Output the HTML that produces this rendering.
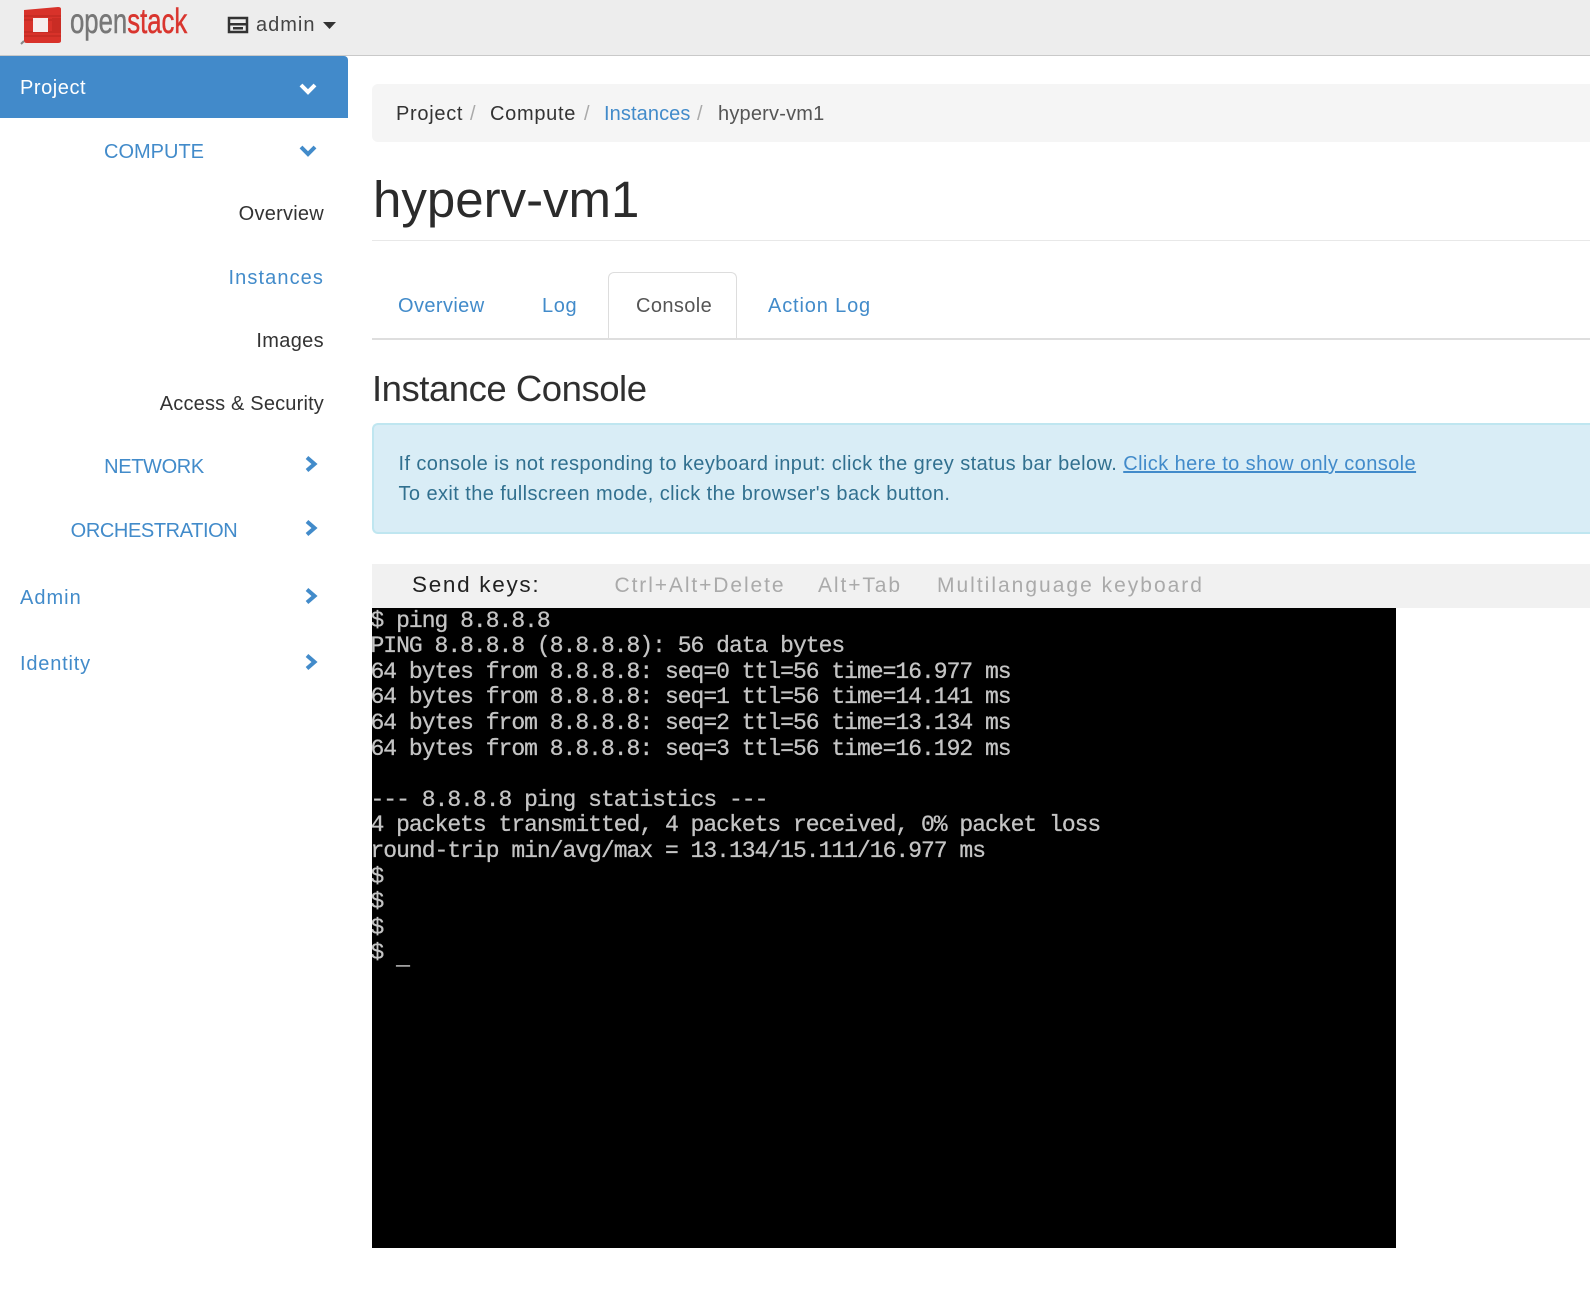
<!DOCTYPE html>
<html lang="en">
<head>
<meta charset="utf-8">
<title>hyperv-vm1</title>
<style>
html,body{margin:0;padding:0;background:#fff;}
body{position:relative;width:1590px;height:1294px;overflow:hidden;font-family:"Liberation Sans",sans-serif;font-size:20px;color:#333;}
.a{position:absolute;white-space:nowrap;line-height:30px;height:30px;filter:blur(.3px);}
.r{right:1266px;text-align:right;}
.c{left:4px;width:300px;text-align:center;}
.l{color:#428bca;}
a{color:#428bca;text-decoration:none;}
svg{position:absolute;overflow:visible;}
#term{position:absolute;left:372px;top:608px;width:1024px;height:640px;background:#000;overflow:hidden;}
#term div{position:absolute;left:-1.5px;height:25.6px;line-height:25.6px;white-space:pre;font-family:"Liberation Mono",monospace;font-size:23px;letter-spacing:-1px;color:#c4c4c4;-webkit-text-stroke:.3px #c4c4c4;filter:blur(.3px);margin-top:.5px;}
</style>
</head>
<body>
<!-- header -->
<div style="position:absolute;left:0;top:0;width:1590px;height:55px;background:#ededed;border-bottom:1px solid #c9c9c9;"></div>
<svg style="left:19px;top:5px" width="44" height="40" viewBox="0 0 44 40">
  <path d="M5 5 L39 2 Q42 2 42 4 L42 36 Q42 38 39 38 L8 38 Q5 38 5 36 Z" fill="#d8322a"/>
  <path d="M5 11H42M5 15H42M5 27H42M5 31H42" stroke="#b92820" stroke-width="1.500" opacity=".7"/>
  <rect x="14" y="13" width="15" height="14" fill="#f6eeee"/>
  <path d="M33 13H42V27H33Z" fill="#c92c24"/>
  <path d="M5 36 L2 39" stroke="#888" stroke-width="2"/>
</svg>
<div class="a" style="left:70px;top:7px;font-size:35px;transform:scaleX(.735);transform-origin:0 50%;color:#777;-webkit-text-stroke:.5px currentColor;">open<span style="color:#d9352e;">stack</span></div>
<svg style="left:228px;top:17px" width="20" height="16" viewBox="0 0 20 16">
  <rect x="1" y="1" width="18" height="14" fill="none" stroke="#333" stroke-width="2.500"/>
  <rect x="1" y="6" width="18" height="2.500" fill="#333"/><rect x="5" y="10" width="10" height="2.500" fill="#333"/>
</svg>
<div class="a" style="left:256px;top:10px;letter-spacing:1px;color:#444;">admin</div>
<svg style="left:323px;top:22px" width="13" height="7" viewBox="0 0 13 7"><path d="M0 0H13L6.500 7Z" fill="#333"/></svg>

<!-- sidebar -->
<div style="position:absolute;left:0;top:56px;width:348px;height:62px;background:#428aca;border-top-right-radius:4px;"></div>
<div class="a" style="left:20px;top:73px;color:#fff;letter-spacing:.55px;">Project</div>
<svg style="left:299px;top:83px" width="18" height="12" viewBox="0 0 18 12"><path d="M2 2L9 9L16 2" fill="none" stroke="#fff" stroke-width="4"/></svg>
<div class="a c l" style="top:137px;">COMPUTE</div>
<svg style="left:299px;top:145px" width="18" height="12" viewBox="0 0 18 12"><path d="M2 2L9 9L16 2" fill="none" stroke="#428bca" stroke-width="4"/></svg>
<div class="a r" style="top:199px;letter-spacing:.25px;">Overview</div>
<div class="a r l" style="top:263px;letter-spacing:1.1px;">Instances</div>
<div class="a r" style="top:326px;letter-spacing:.35px;">Images</div>
<div class="a r" style="top:389px;letter-spacing:.18px;">Access &amp; Security</div>
<div class="a c l" style="top:452px;letter-spacing:-.35px;">NETWORK</div>
<svg style="left:305px;top:456px" width="12" height="17" viewBox="0 0 12 17"><path d="M2 1.500L9.500 8L2 14.500" fill="none" stroke="#428bca" stroke-width="4"/></svg>
<div class="a c l" style="top:516px;letter-spacing:-.4px;">ORCHESTRATION</div>
<svg style="left:305px;top:520px" width="12" height="17" viewBox="0 0 12 17"><path d="M2 1.500L9.500 8L2 14.500" fill="none" stroke="#428bca" stroke-width="4"/></svg>
<div class="a l" style="left:20px;top:583px;letter-spacing:1px;">Admin</div>
<svg style="left:305px;top:588px" width="12" height="17" viewBox="0 0 12 17"><path d="M2 1.500L9.500 8L2 14.500" fill="none" stroke="#428bca" stroke-width="4"/></svg>
<div class="a l" style="left:20px;top:649px;letter-spacing:.8px;">Identity</div>
<svg style="left:305px;top:654px" width="12" height="17" viewBox="0 0 12 17"><path d="M2 1.500L9.500 8L2 14.500" fill="none" stroke="#428bca" stroke-width="4"/></svg>

<!-- breadcrumb -->
<div style="position:absolute;left:372px;top:84px;right:0;height:58px;background:#f5f5f5;border-radius:6px 0 0 6px;"></div>
<div class="a" style="left:396px;top:99px;letter-spacing:.7px;">Project</div>
<div class="a" style="left:470px;top:99px;color:#aaa;">/</div>
<div class="a" style="left:490px;top:99px;letter-spacing:.7px;">Compute</div>
<div class="a" style="left:584px;top:99px;color:#aaa;">/</div>
<div class="a l" style="left:604px;top:99px;letter-spacing:.1px;">Instances</div>
<div class="a" style="left:697px;top:99px;color:#aaa;">/</div>
<div class="a" style="left:718px;top:99px;color:#555;letter-spacing:.2px;">hyperv-vm1</div>

<!-- title -->
<div class="a" style="left:373px;top:165px;height:70px;line-height:70px;font-size:51px;color:#2b2b2b;">hyperv-vm1</div>
<div style="position:absolute;left:372px;right:0;top:240px;height:1px;background:#e8e8e8;"></div>

<!-- tabs -->
<div class="a l" style="left:398px;top:291px;letter-spacing:.4px;">Overview</div>
<div class="a l" style="left:542px;top:291px;letter-spacing:.6px;">Log</div>
<div style="position:absolute;left:608px;top:272px;width:129px;height:67px;background:#fff;border:1px solid #ddd;border-bottom:none;border-radius:6px 6px 0 0;box-sizing:border-box;"></div>
<div class="a" style="left:636px;top:291px;color:#555;letter-spacing:.4px;">Console</div>
<div class="a l" style="left:768px;top:291px;letter-spacing:.85px;">Action Log</div>
<div style="position:absolute;left:372px;right:0;top:338px;height:2px;background:#dedede;"></div>
<div style="position:absolute;left:609px;top:338px;width:127px;height:1px;background:#dedede;"></div>

<!-- heading -->
<div class="a" style="left:372px;top:369px;height:40px;line-height:40px;font-size:36.500px;letter-spacing:-.47px;color:#2f2f2f;">Instance Console</div>

<!-- alert -->
<div style="position:absolute;left:372px;right:0;top:423px;height:111px;box-sizing:border-box;background:#d9edf6;border:2px solid #bfe6f0;border-right:none;border-radius:6px 0 0 6px;"></div>
<div class="a" style="left:398.5px;top:449px;color:#31708f;letter-spacing:.41px;">If console is not responding to keyboard input: click the grey status bar below. <a href="#" style="text-decoration:underline;">Click here to show only console</a></div>
<div class="a" style="left:398.5px;top:479px;color:#31708f;letter-spacing:.42px;">To exit the fullscreen mode, click the browser's back button.</div>

<!-- send keys bar -->
<div style="position:absolute;left:372px;right:0;top:564px;height:44px;background:#f1f1f1;"></div>
<div class="a" style="left:412px;top:570px;font-size:22.500px;letter-spacing:1.700px;color:#222;">Send keys:</div>
<div class="a" style="left:614.5px;top:571px;font-size:21px;letter-spacing:1.900px;color:#aaa;">Ctrl+Alt+Delete</div>
<div class="a" style="left:818px;top:571px;font-size:21px;letter-spacing:1.900px;color:#aaa;">Alt+Tab</div>
<div class="a" style="left:937px;top:571px;font-size:21px;letter-spacing:2px;color:#aaa;">Multilanguage keyboard</div>

<!-- console -->
<div id="term">
<div style="top:0">$ ping 8.8.8.8</div>
<div style="top:25.6px">PING 8.8.8.8 (8.8.8.8): 56 data bytes</div>
<div style="top:51.2px">64 bytes from 8.8.8.8: seq=0 ttl=56 time=16.977 ms</div>
<div style="top:76.8px">64 bytes from 8.8.8.8: seq=1 ttl=56 time=14.141 ms</div>
<div style="top:102.4px">64 bytes from 8.8.8.8: seq=2 ttl=56 time=13.134 ms</div>
<div style="top:128px">64 bytes from 8.8.8.8: seq=3 ttl=56 time=16.192 ms</div>
<div style="top:179.2px">--- 8.8.8.8 ping statistics ---</div>
<div style="top:204.8px">4 packets transmitted, 4 packets received, 0% packet loss</div>
<div style="top:230.4px">round-trip min/avg/max = 13.134/15.111/16.977 ms</div>
<div style="top:256px">$</div>
<div style="top:281.6px">$</div>
<div style="top:307.2px">$</div>
<div style="top:332.8px">$ <span style="position:relative;top:5px;">_</span></div>
</div>
</body>
</html>
